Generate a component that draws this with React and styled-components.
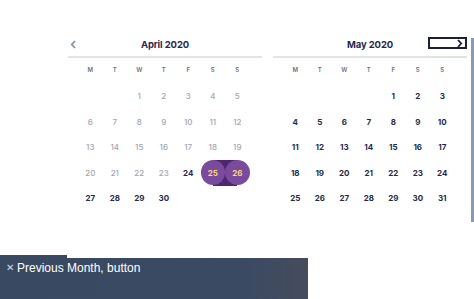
import styled, { createGlobalStyle } from "styled-components"

const Global = createGlobalStyle`
    html, body {
        margin: 0;
        padding: 0;
        background: #ffffff;
        width: 474px;
        height: 299px;
        overflow: hidden;
        font-family: Inter, "Noto Sans", sans-serif;
    }
`

const Page = styled.div`
    position: relative;
    width: 474px;
    height: 299px;
    padding: 33px 0 0 68px;
    box-sizing: border-box;
    display: flex;
    gap: 11px;
`

const Month = styled.div`
    width: 194px;
    display: flex;
    flex-direction: column;
`

const Header = styled.div`
    position: relative;
    height: 23px;
    border-bottom: 2px solid #e2e3e6;
    display: flex;
    align-items: center;
    justify-content: center;
`

const Title = styled.div`
    font-size: 9.5px;
    font-weight: 700;
    color: #1f2a4d;
    letter-spacing: -0.1px;
`

const NavPrev = styled.button`
    position: absolute;
    left: 0;
    top: 5px;
    width: 10px;
    height: 12px;
    padding: 0;
    border: none;
    background: none;
    display: flex;
    align-items: center;
    justify-content: center;
`

const NavNext = styled.button`
    position: absolute;
    right: 0;
    top: 4px;
    width: 39px;
    height: 12px;
    padding: 0 2px 0 0;
    box-sizing: border-box;
    border: 2px solid #1b2038;
    background: #fff;
    display: flex;
    align-items: center;
    justify-content: flex-end;
`

const Grid = styled.div`
    display: grid;
    grid-template-columns: repeat(7, 24.5px);
    grid-auto-rows: 25.5px;
    padding-left: 10px;
`

const WeekDay = styled.div`
    height: 23px;
    display: flex;
    align-items: center;
    justify-content: center;
    font-size: 6px;
    font-weight: 600;
    color: #6c7183;
`

const Day = styled.div`
    position: relative;
    display: flex;
    align-items: center;
    justify-content: center;
    font-size: 8px;
    font-weight: ${p => (p.$muted ? 500 : 700)};
    color: ${p => (p.$muted ? "#a2a5b3" : "#1f2a4d")};

    ${p =>
        p.$band &&
        `
        &::before {
            content: "";
            position: absolute;
            top: 0;
            bottom: 0;
            ${p.$band === "right" ? "left: 50%; right: 0;" : "left: 0; right: 50%;"}
            background: #4e2570;
        }
    `}
`

const Circle = styled.span`
    position: relative;
    width: 25px;
    height: 25px;
    border-radius: 50%;
    background: #7a4a9c;
    color: #f6d774;
    display: flex;
    align-items: center;
    justify-content: center;
`

const SideBar = styled.div`
    position: absolute;
    right: 0;
    top: 38px;
    width: 3px;
    height: 184px;
    background: #8b9ab3;
`

const Caption = styled.div`
    position: absolute;
    left: 0;
    bottom: 0;
    width: 308px;
    height: 41px;
    background: linear-gradient(90deg, #3a4962 0%, #3b4a63 80%, #464c5c 100%);
    font-family: "Liberation Sans", Arial, sans-serif;
    color: #ffffff;
    padding: 3px 0 0 6px;
    box-sizing: border-box;
    display: flex;
    align-items: flex-start;
    gap: 3px;

    &::before {
        content: "";
        position: absolute;
        left: 0;
        top: -3px;
        width: 67px;
        height: 3px;
        background: #3a4962;
    }
`

const Close = styled.span`
    font-size: 10px;
    color: #d7dbe3;
    line-height: 14px;
`

const Label = styled.span`
    font-size: 12px;
    line-height: 15px;
`

const weekdays = ["M", "T", "W", "T", "F", "S", "S"]

function Chevron({ color, dir }) {
    return (
        <svg width="7" height="9" viewBox="0 0 7 9">
            <path
                d={dir === "left" ? "M5 1 L1.8 4.5 L5 8" : "M2 1 L5.2 4.5 L2 8"}
                fill="none"
                stroke={color}
                strokeWidth="1.8"
            />
        </svg>
    )
}

function MonthView({ title, offset, days, boldFrom, range, nav }) {
    const cells = []
    for (let i = 0; i < offset; i++) cells.push(<div key={"e" + i} />)
    for (let d = 1; d <= days; d++) {
        const inRange = range && range.includes(d)
        const band = inRange ? (d === range[0] ? "right" : "left") : null
        cells.push(
            <Day key={d} $muted={d < boldFrom} $band={band}>
                {inRange ? <Circle>{d}</Circle> : d}
            </Day>
        )
    }
    return (
        <Month>
            <Header>
                {nav === "prev" && (
                    <NavPrev aria-label="Previous Month">
                        <Chevron color="#8a93a8" dir="left" />
                    </NavPrev>
                )}
                <Title>{title}</Title>
                {nav === "next" && (
                    <NavNext aria-label="Next Month">
                        <Chevron color="#1b2038" dir="right" />
                    </NavNext>
                )}
            </Header>
            <Grid>
                {weekdays.map((w, i) => (
                    <WeekDay key={i}>{w}</WeekDay>
                ))}
                {cells}
            </Grid>
        </Month>
    )
}

export default function App() {
    return (
        <>
            <Global />
            <Page>
                <MonthView title="April 2020" offset={2} days={30} boldFrom={24} range={[25, 26]} nav="prev" />
                <MonthView title="May 2020" offset={4} days={31} boldFrom={1} nav="next" />
                <SideBar />
                <Caption>
                    <Close>✕</Close>
                    <Label>Previous Month, button</Label>
                </Caption>
            </Page>
        </>
    )
}
